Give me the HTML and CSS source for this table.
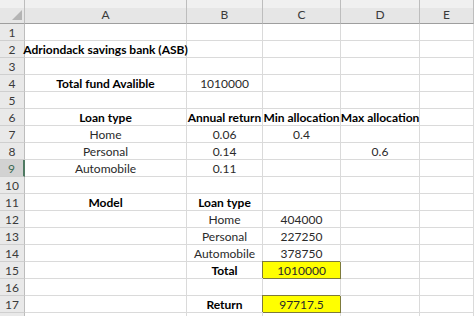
FILE: index.html
```html
<!DOCTYPE html>
<html>
<head>
<meta charset="utf-8">
<link rel="stylesheet" href="styles.css">
</head>
<body>
<div class="sheet">
  <div class="corner"><svg class="tri" width="10" height="10" viewBox="0 0 10 10"><polygon points="10,0 10,10 0,10" fill="#b4b4b4"/></svg></div>
  <div class="colhdr">A</div><div class="colhdr">B</div><div class="colhdr">C</div><div class="colhdr">D</div><div class="colhdr">E</div>

  <div class="rowhdr">1</div><div class="c"></div><div class="c"></div><div class="c"></div><div class="c"></div><div class="c"></div>
  <div class="rowhdr">2</div><div class="c b ctr">Adriondack savings bank (ASB)</div><div class="c"></div><div class="c"></div><div class="c"></div><div class="c"></div>
  <div class="rowhdr">3</div><div class="c"></div><div class="c"></div><div class="c"></div><div class="c"></div><div class="c"></div>
  <div class="rowhdr">4</div><div class="c b ctr">Total fund Avalible</div><div class="c ctr">1010000</div><div class="c"></div><div class="c"></div><div class="c"></div>
  <div class="rowhdr">5</div><div class="c"></div><div class="c"></div><div class="c"></div><div class="c"></div><div class="c"></div>
  <div class="rowhdr">6</div><div class="c b ctr">Loan type</div><div class="c b ctr">Annual return</div><div class="c b ctr">Min allocation</div><div class="c b ctr">Max allocation</div><div class="c"></div>
  <div class="rowhdr">7</div><div class="c ctr">Home</div><div class="c ctr">0.06</div><div class="c ctr">0.4</div><div class="c"></div><div class="c"></div>
  <div class="rowhdr">8</div><div class="c ctr">Personal</div><div class="c ctr">0.14</div><div class="c"></div><div class="c ctr">0.6</div><div class="c"></div>
  <div class="rowhdr sel">9</div><div class="c ctr">Automobile</div><div class="c ctr">0.11</div><div class="c"></div><div class="c"></div><div class="c"></div>
  <div class="rowhdr">10</div><div class="c"></div><div class="c"></div><div class="c"></div><div class="c"></div><div class="c"></div>
  <div class="rowhdr">11</div><div class="c b ctr">Model</div><div class="c b ctr">Loan type</div><div class="c"></div><div class="c"></div><div class="c"></div>
  <div class="rowhdr">12</div><div class="c"></div><div class="c ctr">Home</div><div class="c ctr">404000</div><div class="c"></div><div class="c"></div>
  <div class="rowhdr">13</div><div class="c"></div><div class="c ctr">Personal</div><div class="c ctr">227250</div><div class="c"></div><div class="c"></div>
  <div class="rowhdr">14</div><div class="c"></div><div class="c ctr">Automobile</div><div class="c ctr">378750</div><div class="c"></div><div class="c"></div>
  <div class="rowhdr">15</div><div class="c"></div><div class="c b ctr">Total</div><div class="c ctr hl">1010000</div><div class="c"></div><div class="c"></div>
  <div class="rowhdr">16</div><div class="c"></div><div class="c"></div><div class="c"></div><div class="c"></div><div class="c"></div>
  <div class="rowhdr">17</div><div class="c"></div><div class="c b ctr">Return</div><div class="c ctr hl">97717.5</div><div class="c"></div><div class="c"></div>
  <div class="rowhdr"></div><div class="c"></div><div class="c"></div><div class="c"></div><div class="c"></div><div class="c"></div>
</div>
</body>
</html>
```
FILE: styles.css
```css
html, body {
  margin: 0;
  padding: 0;
  background: #ffffff;
  overflow: hidden;
}
.sheet {
  display: grid;
  grid-template-columns: 25px 162px 76px 78px 79px 54px;
  grid-template-rows: 24px;
  grid-auto-rows: 17px;
  font-family: Lato, "Open Sans", sans-serif;
  font-size: 12px;
  color: #2a2a2a;
}
.sheet > div {
  box-sizing: border-box;
  white-space: nowrap;
  display: flex;
  align-items: center;
  padding-top: 1px;
}
.corner {
  background: linear-gradient(#f0f0f0 0, #f0f0f0 8px, #e6e6e6 8px);
  border-right: 1px solid #bdbdbd;
  border-bottom: 1px solid #9e9e9e;
  position: relative;
}
.tri {
  position: absolute;
  right: 2px;
  bottom: 3px;
}
.colhdr {
  background: linear-gradient(#f0f0f0 0, #f0f0f0 8px, #e6e6e6 8px);
  border-right: 1px solid #bdbdbd;
  border-bottom: 1px solid #9e9e9e;
  justify-content: center;
  color: #3a3a3a;
  font-size: 12px;
}
.sheet > .colhdr {
  padding-top: 5px;
}
.rowhdr {
  background: #e9e9e9;
  border-right: 1px solid #bdbdbd;
  border-bottom: 1px solid #cfcfcf;
  justify-content: center;
  color: #3a3a3a;
  font-size: 12px;
}
.rowhdr.sel {
  background: #d2d2d2;
  border-right: 2px solid #4f7a62;
  color: #3c6a52;
}
.c {
  border-right: 1px solid #dadada;
  border-bottom: 1px solid #dadada;
  overflow: visible;
}
.ctr {
  justify-content: center;
}
.b {
  font-weight: bold;
  color: #000;
}
.hl {
  background: #ffff00;
  border-right-color: #7d7a3c;
  border-bottom-color: #7d7a3c;
  box-shadow: -1px -1px 0 0 #7d7a3c;
}
```
